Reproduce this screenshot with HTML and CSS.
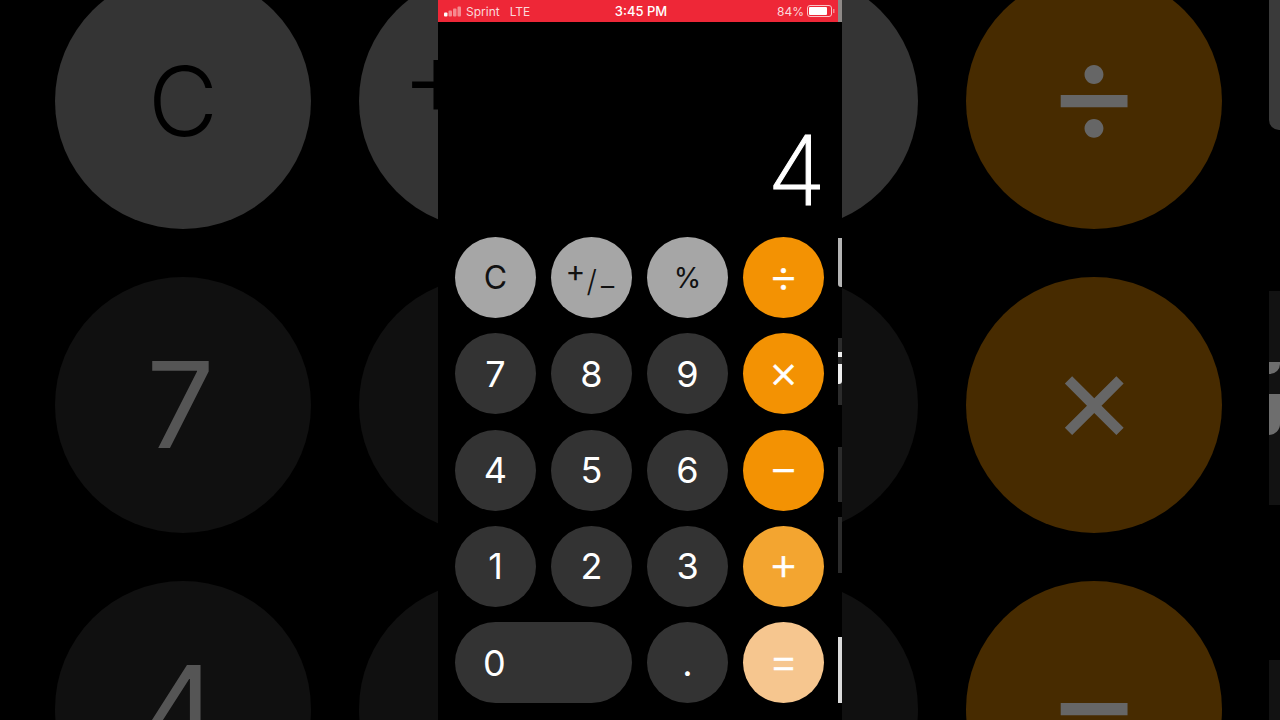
FILE: index.html
```html
<!DOCTYPE html>
<html>
<head>
    <title>Calculator</title>
    <link rel="stylesheet" href="styles.css">
</head>
<body>
    <div class="page">
        <div class="side side-left">
            <div class="bg-grid">
                <div class="bg-key bg-light"><span class="bg-c">C</span></div>
                <div class="bg-key bg-light"><span class="bg-plus">+</span></div>
                <div class="bg-key bg-dark"><span class="bg-num">7</span></div>
                <div class="bg-key bg-dark"></div>
                <div class="bg-key bg-dark"><span class="bg-num">4</span></div>
                <div class="bg-key bg-dark"></div>
            </div>
        </div>

        <div class="phone">
            <div class="status">
                <div class="status-left">
                    <svg class="signal" width="18" height="11" viewBox="0 0 18 11">
                        <rect x="0" y="6.5" width="3.5" height="4" rx="1" fill="#fff"/>
                        <rect x="4.5" y="4.5" width="3.5" height="6" rx="1" fill="#f58a90"/>
                        <rect x="9" y="2.5" width="3.5" height="8" rx="1" fill="#f58a90"/>
                        <rect x="13.5" y="0.5" width="3.5" height="10" rx="1" fill="#f58a90"/>
                    </svg>
                    <span>Sprint</span>
                    <span class="lte">LTE</span>
                </div>
                <div class="status-time">3:45 PM</div>
                <div class="status-right">
                    <span>84%</span>
                    <svg class="battery" width="28" height="12" viewBox="0 0 28 12">
                        <rect x="0.5" y="0.5" width="24" height="11" rx="2.5" fill="none" stroke="#f9c5c8"/>
                        <rect x="2" y="2" width="18" height="8" rx="1" fill="#fff"/>
                        <rect x="26" y="4" width="1.5" height="4" fill="#f58a90"/>
                    </svg>
                </div>
            </div>

            <div class="display">4</div>

            <div class="keys">
                <div class="key light">C</div>
                <div class="key light plusminus"><span class="pm-plus">+</span><span class="pm-slash">/</span><span class="pm-minus">−</span></div>
                <div class="key light percent">%</div>
                <div class="key op">÷</div>
                <div class="key dark">7</div>
                <div class="key dark">8</div>
                <div class="key dark">9</div>
                <div class="key op">×</div>
                <div class="key dark">4</div>
                <div class="key dark">5</div>
                <div class="key dark">6</div>
                <div class="key op">−</div>
                <div class="key dark">1</div>
                <div class="key dark">2</div>
                <div class="key dark">3</div>
                <div class="key op op-plus">+</div>
                <div class="key dark zero">0</div>
                <div class="key dark">.</div>
                <div class="key op op-equals">=</div>
            </div>

            <div class="status-edge"></div>
            <div class="edge">
                <div class="seg seg-1"></div>
                <div class="seg seg-2">
                    <div class="seg-glyph-top"></div>
                    <div class="seg-glyph"></div>
                </div>
                <div class="seg seg-3"></div>
                <div class="seg seg-4"></div>
                <div class="seg seg-5"></div>
            </div>
        </div>

        <div class="side side-right">
            <div class="bg-grid bg-grid-right">
                <div class="bg-key bg-light"></div>
                <div class="bg-key bg-orange"><span class="bg-sym">÷</span></div>
                <div class="bg-key bg-dark"></div>
                <div class="bg-key bg-orange"><span class="bg-sym bg-times">×</span></div>
                <div class="bg-key bg-dark"></div>
                <div class="bg-key bg-orange"><span class="bg-sym">−</span></div>
            </div>
            <div class="bg-edge">
                <div class="bg-seg-1"></div>
                <div class="bg-seg-2">
                    <div class="bg-glyph-top"></div>
                    <div class="bg-glyph"></div>
                </div>
                <div class="bg-seg-3"></div>
            </div>
        </div>
    </div>
</body>
</html>
```

FILE: styles.css
```css
* {
    box-sizing: border-box;
}

body {
    margin: 0;
    background-color: #000;
    font-family: Inter, "Liberation Sans", sans-serif;
    overflow: hidden;
}

.page {
    display: flex;
    width: 1280px;
    height: 720px;
}

/* blurred copies of the keypad either side of the video */
.side {
    position: relative;
    width: 438px;
    height: 720px;
    overflow: hidden;
}

.bg-grid {
    display: grid;
    grid-template-columns: 256px 256px;
    grid-auto-rows: 256px;
    gap: 48px;
    margin-top: -27px;
    margin-left: 55px;
}

.bg-grid-right {
    margin-left: -180px;
}

.bg-key {
    display: flex;
    align-items: center;
    justify-content: center;
    width: 256px;
    height: 256px;
    border-radius: 50%;
    line-height: 1;
}

.bg-light {
    background-color: #343434;
}

.bg-dark {
    background-color: #101010;
}

.bg-orange {
    background-color: #472b00;
}

.bg-c {
    color: #000;
    font-size: 96px;
    font-weight: 300;
}

.bg-plus {
    margin-right: 100px;
    margin-bottom: 50px;
    color: #000;
    font-size: 110px;
    font-weight: 300;
}

.bg-num {
    margin-right: 5px;
    color: #555;
    font-size: 120px;
}

.bg-sym {
    margin-bottom: 22px;
    color: #666;
    font-size: 146px;
}

.bg-times {
    margin-bottom: 18px;
    font-size: 128px;
}

.bg-edge {
    position: absolute;
    top: 0;
    right: 0;
    width: 11px;
}

.bg-seg-1 {
    height: 130px;
    background-color: #3a3a3a;
    border-bottom-left-radius: 10px;
}

.bg-seg-2 {
    height: 214px;
    margin-top: 161px;
    padding-top: 71px;
    background-color: #121212;
}

.bg-glyph-top {
    height: 12px;
    background-color: #6e6e6e;
    border-bottom-right-radius: 10px;
}

.bg-glyph {
    height: 41px;
    margin-top: 20px;
    background-color: #6e6e6e;
    border-bottom-right-radius: 12px;
}

.bg-seg-3 {
    height: 60px;
    margin-top: 155px;
    background-color: #121212;
}

.phone {
    position: relative;
    width: 404px;
    height: 720px;
    background-color: #000;
}

.status {
    display: grid;
    grid-template-columns: 1fr auto 1fr;
    align-items: center;
    height: 22px;
    padding: 0 6px;
    background-color: #ee2737;
    color: #fbd9db;
    font-size: 12px;
}

.status-left {
    display: flex;
    align-items: center;
    gap: 4px;
}

.lte {
    margin-left: 6px;
}

.status-time {
    margin-left: 2px;
    color: #fff;
    font-size: 13px;
    font-weight: 500;
}

.status-right {
    display: flex;
    align-items: center;
    justify-content: flex-end;
    gap: 3px;
    padding-right: 1px;
}

.status-edge {
    position: absolute;
    top: 0;
    right: 0;
    width: 4px;
    height: 22px;
    background-color: #8f8a88;
}

.display {
    height: 215px;
    padding-top: 100px;
    padding-right: 16px;
    color: #fff;
    font-size: 96px;
    font-weight: 200;
    -webkit-text-stroke: 1px #fff;
    line-height: 1;
    text-align: right;
}

.keys {
    display: grid;
    grid-template-columns: repeat(4, 81px);
    grid-auto-rows: 81px;
    gap: 15.25px 15px;
    padding-left: 17px;
}

.key {
    display: flex;
    align-items: center;
    justify-content: center;
    border-radius: 41px;
    font-size: 36px;
    line-height: 1;
}

.light {
    background-color: #a6a6a6;
    color: #111;
    font-size: 32px;
}

.percent {
    font-size: 28px;
}

.pm-plus {
    margin-bottom: 14px;
    font-size: 30px;
}

.pm-slash {
    margin: 7px 1px 0;
    font-size: 30px;
    font-weight: 300;
}

.pm-minus {
    margin-top: 14px;
    font-size: 30px;
    font-weight: 300;
}

.dark {
    background-color: #333;
    color: #fff;
}

.op {
    padding-bottom: 6px;
    background-color: #f39203;
    color: #fff;
    font-size: 46px;
    font-weight: 300;
    -webkit-text-stroke: 0.4px #fff;
}

.op-plus {
    background-color: #f3a530;
}

.op-equals {
    background-color: #f6c68f;
}

.zero {
    grid-column: span 2;
    justify-content: flex-start;
    padding-left: 28px;
}

/* sliver of the next screen at the right edge of the video */
.edge {
    position: absolute;
    top: 238px;
    right: 0;
    width: 4px;
}

.seg {
    background-color: #2b2b2b;
}

.seg-1 {
    height: 49px;
    background-color: #b4b4b4;
    border-bottom-left-radius: 3px;
}

.seg-2 {
    height: 67px;
    margin-top: 51px;
    padding-top: 14px;
}

.seg-glyph-top {
    height: 5px;
    background-color: #eee;
}

.seg-glyph {
    height: 20px;
    margin-top: 7px;
    background-color: #eee;
    border-bottom-right-radius: 3px;
}

.seg-3 {
    height: 55px;
    margin-top: 42px;
}

.seg-4 {
    height: 56px;
    margin-top: 15px;
}

.seg-5 {
    height: 66px;
    margin-top: 64px;
    background-color: #dcdcdc;
}
```
